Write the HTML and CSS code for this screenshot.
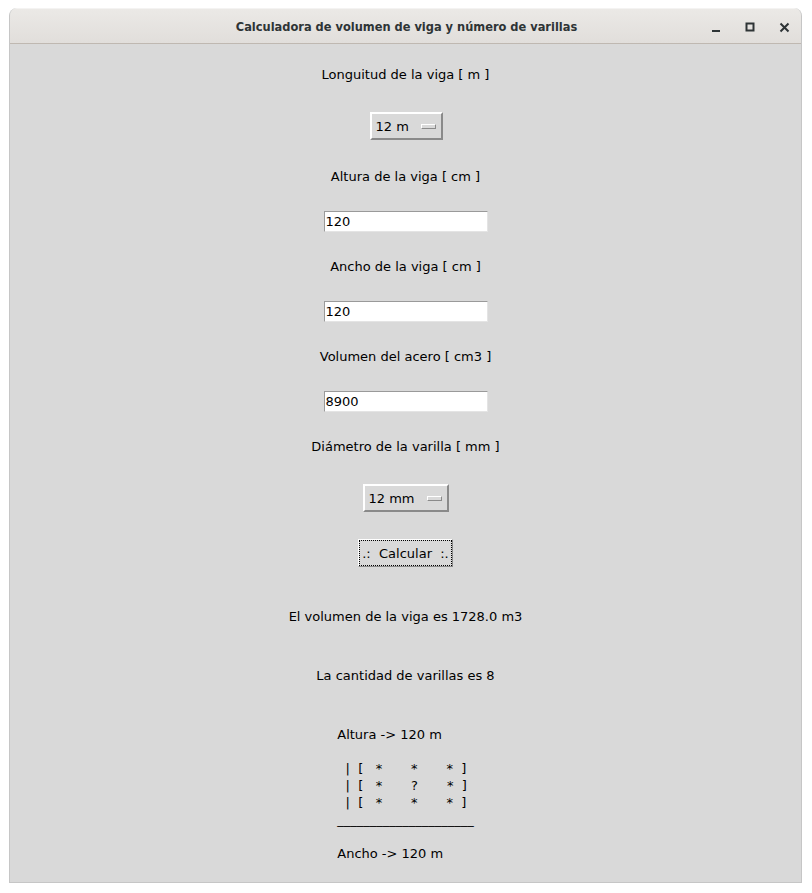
FILE: index.html
```html
<!DOCTYPE html>
<html>
<head>
<meta charset="utf-8">
<link rel="stylesheet" href="styles.css">
</head>
<body>
<div class="window">
  <div class="titlebar">
    <div class="title">Calculadora de volumen de viga y número de varillas</div>
    <div class="controls">
      <svg class="ctl" width="12" height="12" viewBox="0 0 12 12"><rect x="1" y="8" width="8" height="2" fill="#2e3436"/></svg>
      <svg class="ctl" width="12" height="12" viewBox="0 0 12 12"><rect x="1.5" y="1.5" width="7" height="7" fill="none" stroke="#2e3436" stroke-width="2"/></svg>
      <svg class="ctl" width="12" height="12" viewBox="0 0 12 12"><path d="M1.5 1.5 L9.5 9.5 M9.5 1.5 L1.5 9.5" stroke="#2e3436" stroke-width="2"/></svg>
    </div>
  </div>
  <div class="content">
    <div class="label l1">Longuitud de la viga [ m ]</div>
    <div class="optmenu om1"><span class="otext">12 m</span><span class="ind"></span></div>
    <div class="label g28">Altura de la viga [ cm ]</div>
    <div class="entry g26">120</div>
    <div class="label g26">Ancho de la viga [ cm ]</div>
    <div class="entry g26">120</div>
    <div class="label g26">Volumen del acero [ cm3 ]</div>
    <div class="entry g26">8900</div>
    <div class="label g26">Diámetro de la varilla [ mm ]</div>
    <div class="optmenu om2"><span class="otext">12 mm</span><span class="ind"></span></div>
    <div class="button"><span class="focus">.:&nbsp; Calcular &nbsp;:.</span></div>
    <div class="label g41">El volumen de la viga es 1728.0 m3</div>
    <div class="label g42">La cantidad de varillas es 8</div>
    <div class="diagram">Altura -&gt; 120 m

  |  [   *       *       *  ]
  |  [   *       ?       *  ]
  |  [   *       *       *  ]
_____________________

Ancho -&gt; 120 m</div>
  </div>
</div>
</body>
</html>
```
FILE: styles.css
```css
html, body {
  margin: 0;
  padding: 0;
  background: #ffffff;
}
.window {
  margin: 8px 0 0 9px;
  width: 793px;
  height: 875px;
  box-sizing: border-box;
  border: 1px solid #c6c6c6;
  border-top: none;
  border-radius: 8px 8px 0 0;
  overflow: hidden;
  display: flex;
  flex-direction: column;
  background: #d9d9d9;
}
.titlebar {
  height: 36px;
  flex: none;
  box-sizing: border-box;
  background: linear-gradient(#ebe9e6, #e1dedb);
  border-bottom: 1px solid #bfb8b1;
  border-top: 1px solid #f4f3f2;
  position: relative;
  display: flex;
  align-items: center;
  justify-content: center;
}
.title {
  font-family: "DejaVu Sans Condensed", "DejaVu Sans", sans-serif;
  font-weight: bold;
  font-size: 12.7px;
  color: #2e3436;
  padding-left: 2px;
  padding-top: 1px;
}
.controls {
  position: absolute;
  right: 10px;
  top: 13px;
  display: flex;
  gap: 22px;
}
.ctl { display: block; }
.content {
  flex: 1;
  display: flex;
  flex-direction: column;
  align-items: center;
  font-family: "DejaVu Sans", sans-serif;
  font-size: 13px;
  color: #000;
}
.label {
  height: 17px;
  line-height: 17px;
  white-space: nowrap;
}
.l1 { margin-top: 22px; }
.g26 { margin-top: 26px; }
.g28 { margin-top: 28px; }
.g41 { margin-top: 41px; }
.g42 { margin-top: 42px; }
.optmenu {
  box-sizing: border-box;
  height: 28px;
  border: 2px solid;
  border-color: #ffffff #8a8a8a #8a8a8a #ffffff;
  display: flex;
  align-items: center;
  padding: 0 5px 0 4px;
  margin-top: 29px;
}
.otext {
  white-space: nowrap;
  flex: none;
}
.om1 { width: 73px; margin-left: 1px; }
.om2 { width: 86px; margin-left: 0px; }
.ind {
  display: block;
  flex: none;
  width: 13px;
  height: 3px;
  border: 1px solid;
  border-color: #ffffff #8a8a8a #8a8a8a #ffffff;
  background: #d9d9d9;
  margin-left: auto;
}
.entry {
  box-sizing: border-box;
  width: 164px;
  height: 21px;
  background: #ffffff;
  border: 1px solid;
  border-color: #9a9a9a #e4e4e4 #e4e4e4 #9a9a9a;
  line-height: 19px;
  padding-left: 1px;
}
.button {
  margin-top: 27px;
  box-sizing: border-box;
  width: 95px;
  height: 28px;
  border: 1px solid;
  border-color: #ffffff #8a8a8a #8a8a8a #ffffff;
  display: flex;
  align-items: stretch;
}
.focus {
  flex: 1;
  border: 1px dotted #000;
  display: flex;
  align-items: center;
  justify-content: center;
  white-space: nowrap;
}
.diagram {
  margin-top: 42px;
  white-space: pre;
  line-height: 17px;
}
```
